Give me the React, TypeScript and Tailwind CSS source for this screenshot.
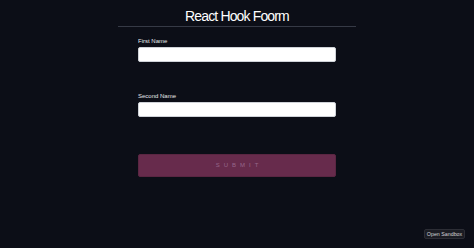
import React from "react";

export default function App() {
  return (
    <div className="relative w-full h-[248px] bg-[#0c0e17] overflow-hidden" style={{ fontFamily: '"Liberation Sans", Arial, sans-serif' }}>
      <div className="w-[238px] mx-auto pt-[9px]">
        <h1 className="text-center text-white text-[14px] leading-[15px] tracking-[-0.85px] font-normal">React Hook Foorm</h1>
        <div className="mt-[2px] h-px bg-[#363a46]" />
        <form className="w-[198px] mx-auto mt-[11px] flex flex-col" onSubmit={(e) => e.preventDefault()}>
          <label className="text-[6px] leading-[7px] text-[#e6e6ea] h-[7px]">First Name</label>
          <input className="mt-[2px] h-[15px] w-full bg-white rounded-[2px] border border-[#cfd2d8] outline-none" />
          <label className="mt-[31px] text-[6px] leading-[7px] text-[#e6e6ea] h-[7px]">Second Name</label>
          <input className="mt-[2px] h-[15px] w-full bg-white rounded-[2px] border border-[#cfd2d8] outline-none" />
          <button type="submit" className="mt-[37px] h-[23px] w-full bg-[#672b4c] rounded-[2px] border border-[#5a2642] text-[6px] leading-[7px] tracking-[4px] pl-[4px] text-[#96678a]">SUBMIT</button>
        </form>
      </div>
      <div className="absolute right-[9px] bottom-[9px] w-[41px] h-[10px] bg-[#1b1c23] border border-[#2c2d35] rounded-[2px] flex items-center justify-center text-[5.3px] leading-[6px] text-[#d4d4d8]">Open Sandbox</div>
    </div>
  );
}
